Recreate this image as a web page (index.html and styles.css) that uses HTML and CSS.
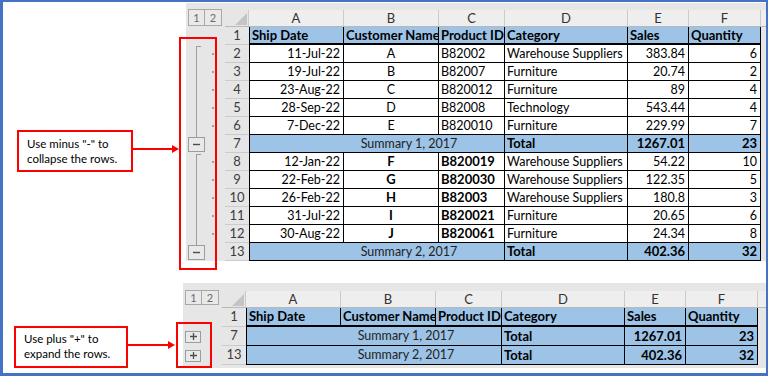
FILE: index.html
```html
<!DOCTYPE html>
<html lang="en">
<head>
<meta charset="utf-8">
<title>Group rows</title>
<link rel="stylesheet" href="styles.css">
</head>
<body>
<div class="frame">
  <section class="panel panel-top">
    <div class="sheet">
      <div class="row top">
        <div class="g"><div class="levels"><span>1</span><span>2</span></div></div>
        <div class="corner"><i></i></div>
        <div class="ch">A</div><div class="ch">B</div><div class="ch">C</div><div class="ch">D</div><div class="ch">E</div><div class="ch">F</div><div class="ch fill"></div>
      </div>
      <div class="row hd">
        <div class="g"></div><div class="rh">1</div>
        <div class="c a">Ship Date</div><div class="c">Customer Name</div><div class="c">Product ID</div><div class="c">Category</div><div class="c">Sales</div><div class="c">Quantity</div>
      </div>
      <div class="row">
        <div class="g g-start"><div class="ln"><div class="vl"></div></div><div class="dt"><i></i></div></div><div class="rh">2</div>
        <div class="c a r">11-Jul-22</div><div class="c m">A</div><div class="c">B82002</div><div class="c">Warehouse Suppliers</div><div class="c r">383.84</div><div class="c r">6</div>
      </div>
      <div class="row">
        <div class="g"><div class="ln"><div class="vl"></div></div><div class="dt"><i></i></div></div><div class="rh">3</div>
        <div class="c a r">19-Jul-22</div><div class="c m">B</div><div class="c">B82007</div><div class="c">Furniture</div><div class="c r">20.74</div><div class="c r">2</div>
      </div>
      <div class="row">
        <div class="g"><div class="ln"><div class="vl"></div></div><div class="dt"><i></i></div></div><div class="rh">4</div>
        <div class="c a r">23-Aug-22</div><div class="c m">C</div><div class="c">B820012</div><div class="c">Furniture</div><div class="c r">89</div><div class="c r">4</div>
      </div>
      <div class="row">
        <div class="g"><div class="ln"><div class="vl"></div></div><div class="dt"><i></i></div></div><div class="rh">5</div>
        <div class="c a r">28-Sep-22</div><div class="c m">D</div><div class="c">B82008</div><div class="c">Technology</div><div class="c r">543.44</div><div class="c r">4</div>
      </div>
      <div class="row">
        <div class="g"><div class="ln"><div class="vl"></div></div><div class="dt"><i></i></div></div><div class="rh">6</div>
        <div class="c a r">7-Dec-22</div><div class="c m">E</div><div class="c">B820010</div><div class="c">Furniture</div><div class="c r">229.99</div><div class="c r">7</div>
      </div>
      <div class="row sum">
        <div class="g g-end"><div class="ln"><div class="vl"></div><div class="obtn"><svg width="9" height="3" viewBox="0 0 9 3"><path d="M1 1.5H8" stroke="#4d4d4d" stroke-width="1.4"/></svg></div></div></div><div class="rh">7</div>
        <div class="c a span3">Summary 1, 2017</div><div class="c b">Total</div><div class="c r b">1267.01</div><div class="c r b">23</div>
      </div>
      <div class="row">
        <div class="g g-start"><div class="ln"><div class="vl"></div></div><div class="dt"><i></i></div></div><div class="rh">8</div>
        <div class="c a r">12-Jan-22</div><div class="c m b">F</div><div class="c b">B820019</div><div class="c">Warehouse Suppliers</div><div class="c r">54.22</div><div class="c r">10</div>
      </div>
      <div class="row">
        <div class="g"><div class="ln"><div class="vl"></div></div><div class="dt"><i></i></div></div><div class="rh">9</div>
        <div class="c a r">22-Feb-22</div><div class="c m b">G</div><div class="c b">B820030</div><div class="c">Warehouse Suppliers</div><div class="c r">122.35</div><div class="c r">5</div>
      </div>
      <div class="row">
        <div class="g"><div class="ln"><div class="vl"></div></div><div class="dt"><i></i></div></div><div class="rh">10</div>
        <div class="c a r">26-Feb-22</div><div class="c m b">H</div><div class="c b">B82003</div><div class="c">Warehouse Suppliers</div><div class="c r">180.8</div><div class="c r">3</div>
      </div>
      <div class="row">
        <div class="g"><div class="ln"><div class="vl"></div></div><div class="dt"><i></i></div></div><div class="rh">11</div>
        <div class="c a r">31-Jul-22</div><div class="c m b">I</div><div class="c b">B820021</div><div class="c">Furniture</div><div class="c r">20.65</div><div class="c r">6</div>
      </div>
      <div class="row">
        <div class="g"><div class="ln"><div class="vl"></div></div><div class="dt"><i></i></div></div><div class="rh">12</div>
        <div class="c a r">30-Aug-22</div><div class="c m b">J</div><div class="c b">B820061</div><div class="c">Furniture</div><div class="c r">24.34</div><div class="c r">8</div>
      </div>
      <div class="row sum">
        <div class="g g-end"><div class="ln"><div class="vl"></div><div class="obtn"><svg width="9" height="3" viewBox="0 0 9 3"><path d="M1 1.5H8" stroke="#4d4d4d" stroke-width="1.4"/></svg></div></div></div><div class="rh">13</div>
        <div class="c a span3">Summary 2, 2017</div><div class="c b">Total</div><div class="c r b">402.36</div><div class="c r b">32</div>
      </div>
    </div>
    <div class="hl"></div>
    <div class="callout">Use minus "-" to<br>collapse the rows.</div>
    <svg class="arrow" width="46" height="8" viewBox="0 0 46 8"><path d="M0 4H40" stroke="#ff0000" stroke-width="2"/><path d="M39 0L46 4L39 8Z" fill="#ff0000"/></svg>
  </section>

  <section class="panel panel-bottom">
    <div class="sheet sheet-b">
      <div class="row top">
        <div class="g"><div class="levels"><span>1</span><span>2</span></div></div>
        <div class="corner"><i></i></div>
        <div class="ch">A</div><div class="ch">B</div><div class="ch">C</div><div class="ch">D</div><div class="ch">E</div><div class="ch">F</div><div class="ch fill"></div>
      </div>
      <div class="row hd">
        <div class="g"></div><div class="rh">1</div>
        <div class="c a">Ship Date</div><div class="c">Customer Name</div><div class="c">Product ID</div><div class="c">Category</div><div class="c">Sales</div><div class="c">Quantity</div>
      </div>
      <div class="row sum">
        <div class="g g-plus"><div class="obtn pl"><svg width="9" height="9" viewBox="0 0 9 9"><path d="M1 4.5H8M4.5 1V8" stroke="#4d4d4d" stroke-width="1.3"/></svg></div></div><div class="rh">7</div>
        <div class="c a span3">Summary 1, 2017</div><div class="c b">Total</div><div class="c r b">1267.01</div><div class="c r b">23</div>
      </div>
      <div class="row sum">
        <div class="g g-plus"><div class="obtn pl"><svg width="9" height="9" viewBox="0 0 9 9"><path d="M1 4.5H8M4.5 1V8" stroke="#4d4d4d" stroke-width="1.3"/></svg></div></div><div class="rh">13</div>
        <div class="c a span3">Summary 2, 2017</div><div class="c b">Total</div><div class="c r b">402.36</div><div class="c r b">32</div>
      </div>
    </div>
    <div class="hl"></div>
    <div class="callout">Use plus "+" to<br>expand the rows.</div>
    <svg class="arrow" width="47" height="8" viewBox="0 0 47 8"><path d="M0 4H41" stroke="#ff0000" stroke-width="2"/><path d="M40 0L47 4L40 8Z" fill="#ff0000"/></svg>
  </section>
</div>
</body>
</html>
```

FILE: styles.css
```css
* { box-sizing: border-box; margin: 0; padding: 0; }
html, body { margin: 0; background: #fff; }
body { font-family: "Lato", "Liberation Sans", sans-serif; color: #000; }

.frame {
  width: 768px;
  height: 376px;
  border-style: solid;
  border-color: #4472c4;
  border-width: 2px 2px 3px 3px;
  display: flex;
  flex-direction: column;
  padding-top: 1px;
  overflow: hidden;
  background: #fff;
}

.panel { position: relative; display: flex; }
.panel-top { padding-left: 183px; }
.panel-bottom { padding-left: 180px; margin-top: 22px; }

.sheet { flex: 1; background: #e6e6e6; display: flex; flex-direction: column; }
.sheet-b { padding-bottom: 3px; }

.row {
  display: grid;
  grid-template-columns: 39px 24px 95px 95px 66px 123px 61px 72px 1fr;
  height: 18px;
}
.sheet-b .row { height: 19px; }
.row.top { height: 24px; align-items: end; }
.sheet-b .row.top { height: 25px; }

/* column headers */
.ch {
  height: 17px;
  background: #eeeeee;
  border-right: 1px solid #cacaca;
  border-bottom: 1px solid #b8b8b8;
  text-align: center;
  font-size: 13px;
  line-height: 16px;
  color: #333;
}
.ch.fill { border-right: 0; }
.corner {
  height: 17px;
  background: #e6e6e6;
  border-right: 1px solid #cacaca;
  border-bottom: 1px solid #b8b8b8;
  display: flex;
  justify-content: flex-end;
  align-items: flex-end;
  padding: 0 1px 1px 0;
}
.corner i {
  width: 0;
  height: 0;
  border-left: 12px solid transparent;
  border-bottom: 12px solid #c4c4c4;
}

/* outline level buttons */
.levels { display: flex; margin: 0 0 1px 2px; height: 17px; }
.levels span {
  width: 17px;
  height: 17px;
  border: 1px solid #a8a8a8;
  background: #e9e9e9;
  display: flex;
  align-items: center;
  justify-content: center;
  font-size: 11px;
  color: #6b6b6b;
}
.levels span + span { border-left: 0; }
.sheet-b .levels { height: 15px; margin-bottom: 3px; }
.sheet-b .levels span { height: 15px; }

/* outline gutter */
.g { display: flex; }
.g .ln { width: 21px; display: flex; flex-direction: column; align-items: flex-start; }
.g .dt { flex: 1; display: flex; align-items: center; padding-left: 5px; }
.g .dt i { display: block; width: 2px; height: 2px; background: #a0a0a0; }
.vl { margin-left: 10px; width: 5px; border-left: 1px solid #9c9c9c; flex: 1; }
.g-start .vl { border-top: 1px solid #9c9c9c; margin-top: 1px; }
.g-end .vl { flex: 0 0 2px; }
.obtn {
  margin-left: 2px;
  width: 17px;
  height: 15px;
  border: 1px solid #9c9c9c;
  background: #e9e9e9;
  display: flex;
  align-items: center;
  justify-content: center;
}
.g-plus { align-items: center; }
.obtn.pl { width: 16px; height: 12px; }

/* row headers */
.rh {
  background: #e6e6e6;
  border-bottom: 1px solid #cbcbcb;
  text-align: center;
  font-size: 13px;
  line-height: 17px;
  color: #3c3c3c;
}

/* data cells */
.c {
  border-right: 1px solid #000;
  border-bottom: 1px solid #000;
  background: #fff;
  font-size: 12.5px;
  line-height: 17px;
  padding: 0 2px;
  white-space: nowrap;
  overflow: hidden;
}
.c.a { border-left: 1px solid #000; }
.r { text-align: right; padding-right: 3px; }
.m { text-align: center; }
.b { font-weight: 700; font-size: 13px; }
.hd .c { background: #9dc3e6; font-weight: 700; font-size: 13px; border-bottom: 2px solid #000; line-height: 16px; }
.sum .c { background: #9dc3e6; }
.sheet-b .c { line-height: 18px; }
.sheet-b .hd .c { line-height: 17px; }
.span3 { grid-column: span 3; text-align: center; color: #222; padding-left: 66px; }

/* annotations */
.hl { position: absolute; border: 2px solid #ff0000; }
.panel-top .hl { left: 176px; top: 34px; width: 38px; height: 233px; }
.panel-bottom .hl { left: 173px; top: 39px; width: 36px; height: 46px; }

.callout {
  position: absolute;
  border: 2px solid #ff0000;
  background: #fff;
  font-size: 11.5px;
  line-height: 15px;
  color: #000;
  padding: 4px 0 0 8px;
}
.panel-top .callout { left: 14px; top: 127px; width: 116px; height: 42px; }
.panel-bottom .callout { left: 11px; top: 43px; width: 114px; height: 42px; padding-top: 3px; }

.arrow { position: absolute; }
.panel-top .arrow { left: 130px; top: 142px; }
.panel-bottom .arrow { left: 125px; top: 58px; }
```
